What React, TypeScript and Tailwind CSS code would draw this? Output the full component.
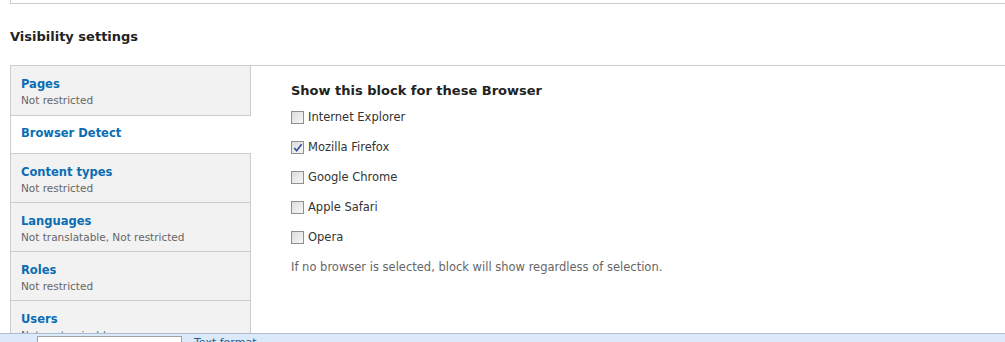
import React from "react";

type Tab = { title: string; summary?: string; selected?: boolean };

const tabs: Tab[] = [
  { title: "Pages", summary: "Not restricted" },
  { title: "Browser Detect", selected: true },
  { title: "Content types", summary: "Not restricted" },
  { title: "Languages", summary: "Not translatable, Not restricted" },
  { title: "Roles", summary: "Not restricted" },
  { title: "Users", summary: "Not customizable" },
];

const browsers = [
  { name: "Internet Explorer", checked: false },
  { name: "Mozilla Firefox", checked: true },
  { name: "Google Chrome", checked: false },
  { name: "Apple Safari", checked: false },
  { name: "Opera", checked: false },
];

function Checkbox({ checked }: { checked: boolean }) {
  return (
    <span className="relative flex h-[13px] w-[13px] shrink-0 items-center justify-center border border-[#8f8f8f] bg-gradient-to-br from-[#dcdcdc] to-[#f7f7f7]">
      {checked && (
        <svg viewBox="0 0 11 11" className="h-[10px] w-[10px]">
          <path d="M1.5 5.5 L4 8.5 L9.5 1.5" fill="none" stroke="#2f4f9c" strokeWidth="1.8" />
        </svg>
      )}
    </span>
  );
}

export default function App() {
  return (
    <div className="relative h-[342px] w-[1005px] overflow-hidden bg-white font-['DejaVu_Sans',sans-serif] text-[#333]">
      {/* previous fieldset edge */}
      <div className="ml-[10px] h-[4px] border-b border-l border-[#cccccc]" />

      <h2 className="ml-[10px] mt-[25px] text-[13px] font-bold leading-[16px] text-[#222]">
        Visibility settings
      </h2>

      {/* vertical tabs */}
      <div className="ml-[10px] mt-[20px] flex border-t border-[#cccccc]">
        <ul className="w-[241px] shrink-0 border-l border-[#cccccc]">
          {tabs.map((t, i) => (
            <li
              key={t.title}
              className={
                t.selected
                  ? "h-[38px] border-b border-[#cccccc] bg-white pl-[10px] pt-[9px]"
                  : i === 0
                  ? "h-[50px] border-b border-r border-[#cccccc] bg-[#f2f2f2] pl-[10px] pt-[10px]"
                  : "h-[49px] border-b border-r border-[#cccccc] bg-[#f2f2f2] pl-[10px] pt-[10px]"
              }
            >
              <div className="text-[11.5px] font-bold leading-[16px] text-[#0a6db3]">{t.title}</div>
              {t.summary && (
                <div className="text-[10.5px] leading-[16px] text-[#666]">{t.summary}</div>
              )}
            </li>
          ))}
        </ul>

        <div className="flex-1 pl-[40px] pt-[17px]">
          <div className="text-[13px] font-bold leading-[16px] text-[#222]">
            Show this block for these Browser
          </div>
          <div className="mt-[12px] flex flex-col gap-[17px]">
            {browsers.map((b) => (
              <label key={b.name} className="flex h-[13px] items-center gap-[4px] text-[11.5px] text-[#333]">
                <Checkbox checked={b.checked} />
                {b.name}
              </label>
            ))}
          </div>
          <p className="mt-[15px] text-[11.5px] leading-[16px] text-[#666]">
            If no browser is selected, block will show regardless of selection.
          </p>
        </div>
      </div>

      {/* bottom bar overlay */}
      <div className="absolute bottom-0 left-0 h-[9px] w-full overflow-hidden border-t border-[#a9bdd9] bg-[#dce9f9]">
        <div className="ml-[37px] mt-[2px] flex items-start gap-[12px]">
          <div className="h-[10px] w-[145px] border border-[#a0a0a0] bg-white" />
          <span className="text-[11px] leading-[14px] text-[#2a5a8c]">Text format</span>
        </div>
      </div>
    </div>
  );
}
